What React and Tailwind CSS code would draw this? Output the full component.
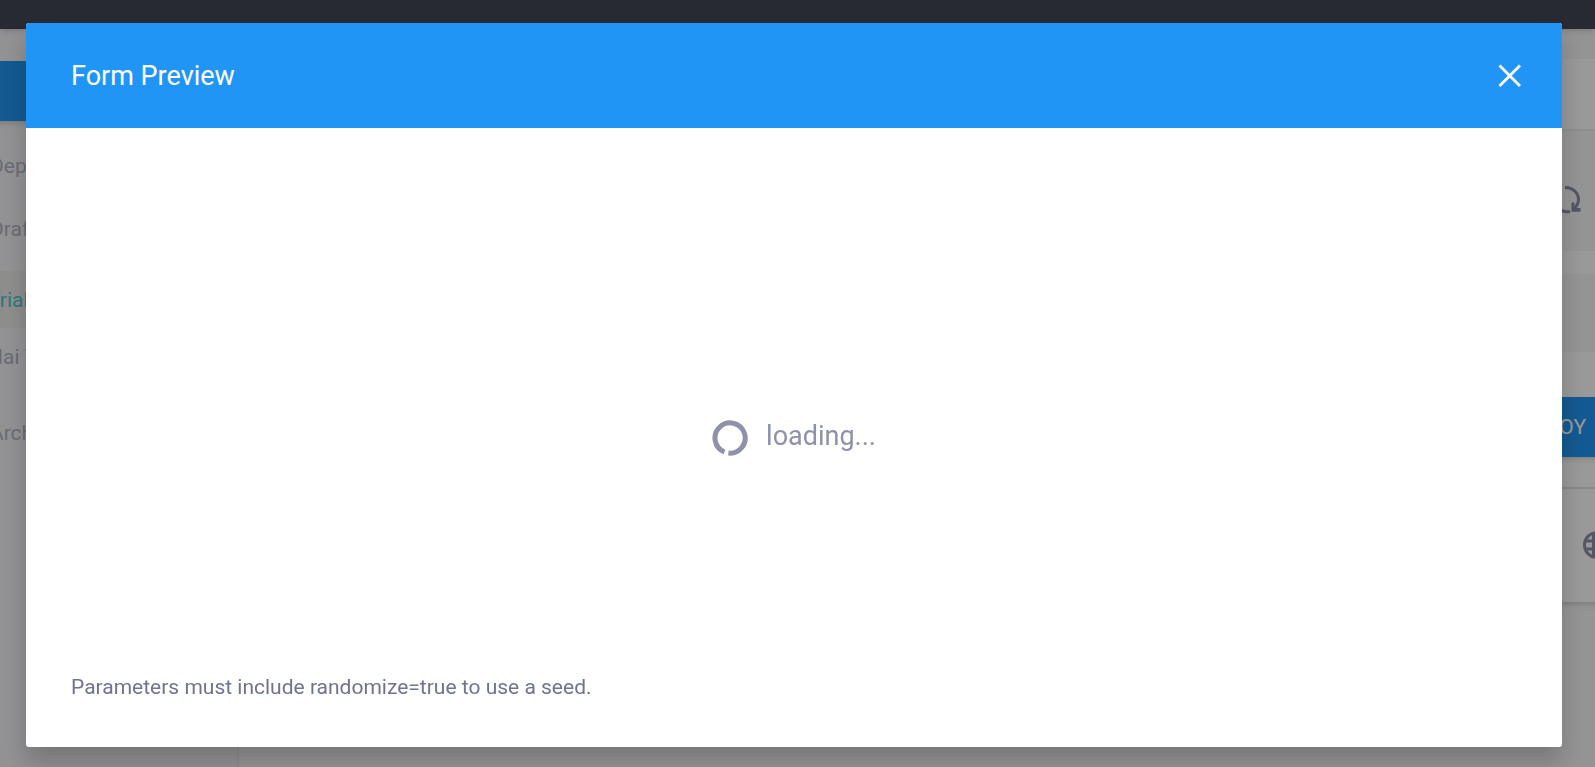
const forms = [
  { group: "Deployed", items: [] },
  { group: "Draft", items: ["Trial", "Hai Y"] },
];

function ReloadIcon() {
  return (
    <svg width="30" height="30" viewBox="0 0 30 30" fill="none" stroke="currentColor" strokeWidth="3">
      <path d="M10 3.800A12 12 0 0 0 9 25.500" />
      <path d="M14 3.500C22 3.500 27.500 9 27.500 15.500C27.500 19.500 26 22 23 24.500" />
      <path d="M19 27.500C15 28.300 12 27.500 9 25.500" />
      <path d="M20.500 18.500H23.500V24H29.500V27.800H20.500Z" fill="currentColor" stroke="none" />
    </svg>
  );
}

function GlobeIcon() {
  return (
    <svg width="28" height="28" viewBox="0 0 28 28" fill="none" stroke="currentColor" strokeWidth="3">
      <circle cx="14" cy="14" r="12.500" />
      <path d="M10.500 2.500V25.500M17.500 2.500V25.500" />
      <path d="M2.500 10H25.500M2.500 18H25.500" />
    </svg>
  );
}

function Sidebar() {
  return (
    <aside className="-ml-6 w-[263px] shrink-0 border-r-2 border-[#ebebeb] bg-[#f3f3f6] pt-8 text-[21px] leading-6 text-[#b0b3c4]">
      <button type="button" aria-label="New" className="block h-[60px] w-[238px] bg-[#2095f3] shadow-md"></button>
      <nav>
        <a href="#deployed" className="mt-[33px] block pl-3.5">{forms[0].group}</a>
        <a href="#draft" className="mt-[39px] block pl-3.5">{forms[1].group}</a>
        <div className="mt-[30px] leading-6">
          <a href="#trial" className="block bg-[#ececeb] pt-[17px] pb-4 pl-3 text-[#4dc6d6]">{forms[1].items[0]}</a>
          <a href="#hai" className="block pt-[17px] pb-4 pl-3">{forms[1].items[1]}</a>
        </div>
        <a href="#archived" className="mt-9 block pl-3.5">Archived</a>
      </nav>
    </aside>
  );
}

function Main() {
  return (
    <main className="-mr-9 flex-1 bg-[#f7f7f7] pt-[30px] text-[#8b8fa8]">
      <div className="h-[72px] border-b-2 border-[#ebebed] bg-white"></div>
      <div className="flex h-[120px] items-center justify-end bg-[#f7f7f7] pt-4 pr-[50px]">
        <button type="button" aria-label="Reload">
          <ReloadIcon />
        </button>
      </div>
      <div className="bg-white pt-[23px] shadow-md">
        <div className="h-[78px] bg-[#f7f7f7]"></div>
        <div className="flex justify-end pt-[45px] pb-[30px]">
          <button type="button" className="h-[60px] bg-[#2095f3] px-[45px] pt-0.5 text-[21px] text-white shadow-md">
            DEPLOY
          </button>
        </div>
        <div className="flex h-[115px] items-center justify-end border-t-2 border-[#e3e3ea] pr-5 pb-0.5">
          <button type="button" aria-label="Languages">
            <GlobeIcon />
          </button>
        </div>
      </div>
    </main>
  );
}

function PreviewModal() {
  return (
    <div className="fixed inset-0 flex bg-black/40 pt-[23px] pr-[33px] pb-5 pl-[26px]">
      <section
        role="dialog"
        aria-labelledby="modal-title"
        className="flex flex-1 flex-col overflow-hidden rounded-[3px] bg-white shadow-[0_15px_25px_rgba(0,0,0,0.2)]"
      >
        <header className="flex h-[105px] shrink-0 items-center justify-between bg-[#2095f5] pr-10 pl-[45px] text-white">
          <h1 id="modal-title" className="text-[27px] leading-8">Form Preview</h1>
          <button type="button" aria-label="Close">
            <svg width="24" height="24" viewBox="0 0 24 24" fill="none" stroke="currentColor" strokeWidth="2.800">
              <path d="M1.500 1.500L22 22M22 1.500L1.500 22" />
            </svg>
          </button>
        </header>

        <div className="grid flex-1 grid-rows-[1fr_auto_1fr]">
          <div></div>
          <div className="flex items-center justify-center gap-[18px] text-[#8d91a9]">
            <svg width="36" height="36" viewBox="0 0 36 36" fill="none" stroke="currentColor" strokeWidth="5">
              <path d="M12.400 32A15.100 15.100 0 1 1 16.400 33.020" />
            </svg>
            <p className="pb-1 text-[27px] leading-8">loading...</p>
          </div>
          <p className="self-end pb-[45px] pl-[45px] text-[21px] leading-[30px] text-[#6f7392]">
            Parameters must include randomize=true to use a seed.
          </p>
        </div>
      </section>
    </div>
  );
}

export default function App() {
  return (
    <div className="flex min-h-screen flex-col overflow-hidden bg-[#f7f7f7] font-[Roboto,sans-serif]">
      <header className="relative h-[29px] shrink-0 bg-[#414655] shadow-md"></header>
      <div className="flex flex-1">
        <Sidebar />
        <Main />
      </div>
      <PreviewModal />
    </div>
  );
}
